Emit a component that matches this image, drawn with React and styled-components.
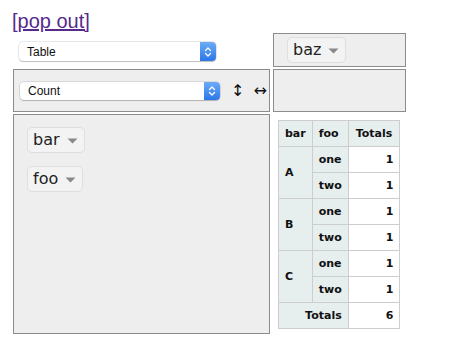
import React from 'react'
import styled, {createGlobalStyle} from 'styled-components'

const GlobalStyle = createGlobalStyle`
    body {
        margin: 0;
        background: #fff;
        font-family: "DejaVu Sans", Verdana, sans-serif;
    }
`

const rows = [
    {bar: 'A', foo: ['one', 'two']},
    {bar: 'B', foo: ['one', 'two']},
    {bar: 'C', foo: ['one', 'two']},
]

const Chevrons = () => (
    <svg width="8" height="12" viewBox="0 0 8 12">
        <path d="M1.5 4.5 L4 2 L6.5 4.5 M1.5 7.5 L4 10 L6.5 7.5" stroke="#fff" strokeWidth="1.4" fill="none" strokeLinecap="round" strokeLinejoin="round" />
    </svg>
)

const Caret = () => (
    <CaretSvg width="11" height="6" viewBox="0 0 11 6">
        <path d="M0.5 0.5 L10.5 0.5 L5.5 5.5 Z" fill="#888" />
    </CaretSvg>
)

const FakeSelect = ({label, width, height}) => (
    <SelectBox $w={width} $h={height}>
        <SelectText>{label}</SelectText>
        <Stepper><Chevrons /></Stepper>
    </SelectBox>
)

const Attr = ({name}) => (
    <Pill>{name}<Caret /></Pill>
)

const App = () => {
    return (
        <Page>
            <GlobalStyle />
            <PopOut href="#">[pop out]</PopOut>

            <Ui>
                <RendererCell>
                    <FakeSelect label="Table" width={197} height={19} />
                </RendererCell>
                <AxisCell $center>
                    <Attr name="baz" />
                </AxisCell>

                <ValsCell>
                    <FakeSelect label="Count" width={200} height={18} />
                    <Order $ml={11}>↕</Order>
                    <Order $ml={9}>↔</Order>
                </ValsCell>
                <AxisCell />

                <AxisCell $column>
                    <Attr name="bar" />
                    <Attr name="foo" />
                </AxisCell>

                <OutputCell>
                    <PvtTable>
                        <thead>
                            <tr>
                                <Th>bar</Th>
                                <Th>foo</Th>
                                <Th $wide>Totals</Th>
                            </tr>
                        </thead>
                        <tbody>
                            {rows.map(r => r.foo.map((f, i) => (
                                <tr key={r.bar + f}>
                                    {i == 0 && <Th rowSpan={2} $middle>{r.bar}</Th>}
                                    <Th>{f}</Th>
                                    <Td>1</Td>
                                </tr>
                            )))}
                            <tr>
                                <Th colSpan={2} $align="right">Totals</Th>
                                <Td>6</Td>
                            </tr>
                        </tbody>
                    </PvtTable>
                </OutputCell>
            </Ui>
        </Page>
    )
}

export default App


const Page = styled.div`
    padding: 10px 0 0 12px;
`

const PopOut = styled.a`
    display: inline-block;
    font-family: "Liberation Sans", Arial, sans-serif;
    font-size: 20px;
    line-height: 22px;
    color: #552a8b;
    text-decoration: underline;
`

const Ui = styled.div`
    display: grid;
    grid-template-columns: 257px 133px;
    grid-template-rows: 34px 43px 220px;
    column-gap: 3px;
    row-gap: 2px;
    margin: 1px 0 0 1px;
    color: #333;
`

const RendererCell = styled.div`
    display: flex;
    align-items: flex-start;
    padding: 9px 0 0 6px;
`

const AxisCell = styled.div`
    display: flex;
    flex-direction: ${p => p.$column ? 'column' : 'row'};
    align-items: ${p => p.$center ? 'center' : 'flex-start'};
    gap: 13px;
    padding: ${p => p.$column ? '12px 13px' : '0 13px'};
    background: #eee;
    border: 1px solid #8c8c8c;
`

const ValsCell = styled.div`
    display: flex;
    align-items: center;
    padding-left: 6px;
    background: #eee;
    border: 1px solid #8c8c8c;
`

const OutputCell = styled.div`
    padding: 6px 0 0 5px;
`

const SelectBox = styled.div`
    display: flex;
    align-items: center;
    width: ${p => p.$w}px;
    height: ${p => p.$h}px;
    background: #fff;
    border-radius: 4px;
    box-shadow: 0 0 0 0.5px rgba(0, 0, 0, 0.18), 0 1px 1px rgba(0, 0, 0, 0.18);
    overflow: hidden;
    font-family: "Liberation Sans", Arial, sans-serif;
    font-size: 12px;
    color: #111;
`

const SelectText = styled.span`
    flex: 1;
    padding-left: 8px;
`

const Stepper = styled.span`
    width: 16px;
    align-self: stretch;
    display: flex;
    align-items: center;
    justify-content: center;
    background: linear-gradient(#6cabf7, #2b77e9);
`

const Order = styled.span`
    margin-left: ${p => p.$ml}px;
    font-family: "DejaVu Sans", sans-serif;
    font-size: 16px;
    color: #111;
`

const Pill = styled.span`
    display: inline-flex;
    align-items: center;
    padding: 2px 5px 2px 5px;
    background: #f3f3f3;
    border: 1px solid #dedede;
    border-radius: 5px;
    font-size: 16px;
    line-height: 20px;
    color: #222;
    white-space: nowrap;
`

const CaretSvg = styled.svg`
    margin: 2px 1px 0 7px;
`

const PvtTable = styled.table`
    border-collapse: collapse;
    font-family: "DejaVu Sans", Verdana, sans-serif;
    font-size: 11px;
    font-weight: bold;
    line-height: 13px;
    color: #111;
`

const Th = styled.th`
    padding: ${p => p.$wide ? '6px 7px 6px 7px' : '6px 6px'};
    background: #e6eeee;
    border: 1px solid #cdcdcd;
    text-align: ${p => p.$align || 'left'};
    vertical-align: ${p => p.$middle ? 'middle' : 'top'};
`

const Td = styled.td`
    padding: 6px 6px;
    background: #fff;
    border: 1px solid #cdcdcd;
    text-align: right;
    vertical-align: top;
`
